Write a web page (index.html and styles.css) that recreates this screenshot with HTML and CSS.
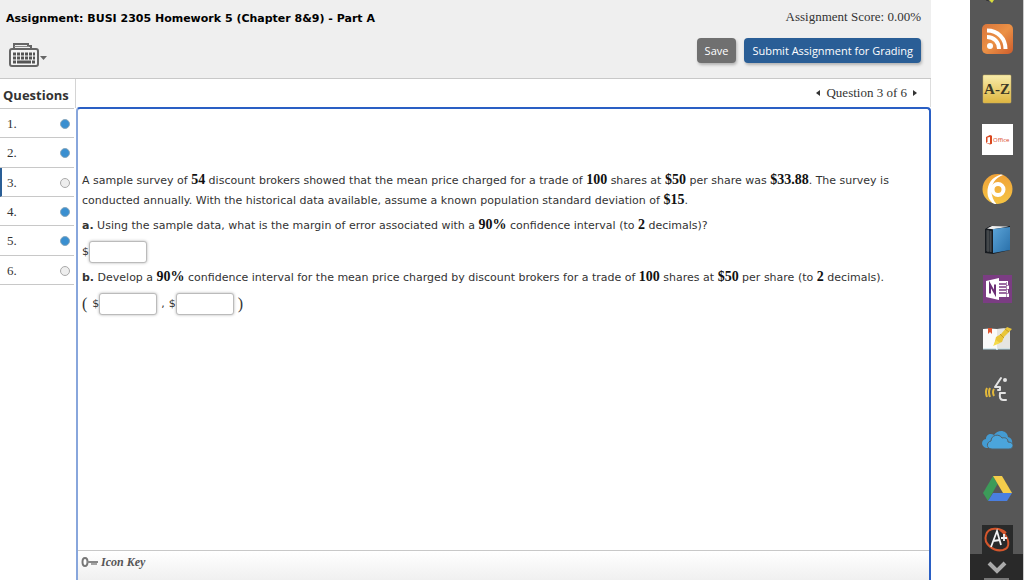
FILE: index.html
```html
<!DOCTYPE html>
<html lang="en">
<head>
    <meta charset="utf-8">
    <title>BUSI 2305 Homework 5</title>
    <link rel="stylesheet" href="styles.css">
</head>
<body>
    <div class="app">
        <main class="assignment">
            <header class="header">
                <div class="header-left">
                    <h1>Assignment: BUSI 2305 Homework 5 (Chapter 8&amp;9) - Part A</h1>
                    <button class="keyboard" aria-label="Keyboard tools">
                        <svg width="40" height="26" viewBox="0 0 40 26">
                            <path d="M6 6V2h14v2h3v3" fill="none" stroke="#666" stroke-width="2"/>
                            <path d="M6 4.500h15" stroke="#888"/>
                            <rect x="2" y="7" width="28" height="17" rx="2" fill="#f4f4f4" stroke="#666" stroke-width="2"/>
                            <path d="M5 12h22M5 16h22" stroke="#555" stroke-width="3" stroke-dasharray="3 1"/>
                            <path d="M5 20h3M9 20h14M24 20h3" stroke="#555" stroke-width="3"/>
                            <path d="M32 14h7l-3.500 4z" fill="#666"/>
                        </svg>
                    </button>
                </div>
                <div class="header-right">
                    <div class="score">Assignment Score: 0.00%</div>
                    <div class="buttons">
                        <button class="btn save">Save</button>
                        <button class="btn submit">Submit Assignment for Grading</button>
                    </div>
                </div>
            </header>
            <div class="columns">
                <nav class="questions">
                    <h2>Questions</h2>
                    <div class="question-list">
                        <a href="#">1.<span class="dot done"></span></a>
                        <a href="#">2.<span class="dot done"></span></a>
                        <a href="#" class="current">3.<span class="dot"></span></a>
                        <a href="#">4.<span class="dot done"></span></a>
                        <a href="#">5.<span class="dot done"></span></a>
                        <a href="#">6.<span class="dot"></span></a>
                    </div>
                </nav>
                <section class="work">
                    <div class="pager">
                        <button aria-label="Previous question"><svg width="4" height="6" viewBox="0 0 4 6"><path d="M4 0v6L0 3z" fill="#333"/></svg></button>
                        <span>Question 3 of 6</span>
                        <button aria-label="Next question"><svg width="4" height="6" viewBox="0 0 4 6"><path d="M0 0v6l4-3z" fill="#333"/></svg></button>
                    </div>
                    <div class="frame">
                        <div class="problem">
                            <p>A sample survey of <span class="num">54</span> discount brokers showed that the mean price charged for a trade of <span class="num">100</span> shares at <span class="num">$50</span> per share was <span class="num">$33.88</span>. The survey is<br>conducted annually. With the historical data available, assume a known population standard deviation of <span class="num">$15</span>.</p>
                            <p><b>a.</b> Using the sample data, what is the margin of error associated with a <span class="num">90%</span> confidence interval (to <span class="num">2</span> decimals)?</p>
                            <div class="answer"><label for="margin">$</label><input type="text" id="margin"></div>
                            <p><b>b.</b> Develop a <span class="num">90%</span> confidence interval for the mean price charged by discount brokers for a trade of <span class="num">100</span> shares at <span class="num">$50</span> per share (to <span class="num">2</span> decimals).</p>
                            <div class="answer"><span class="paren">(</span><label for="low">$</label><input type="text" id="low"><span class="comma">,</span><label for="high">$</label><input type="text" id="high"><span class="paren close">)</span></div>
                        </div>
                        <footer class="icon-key">
                            <svg width="17" height="12" viewBox="0 0 17 12">
                                <ellipse cx="4" cy="6" rx="2.500" ry="4" fill="#fff" stroke="#777" stroke-width="2"/>
                                <path d="M6 6h11" stroke="#888" stroke-width="2"/>
                                <path d="M11 7v2M13 7v2M15 7v2" stroke="#888" stroke-width="1.500"/>
                            </svg>
                            <a href="#">Icon Key</a>
                        </footer>
                    </div>
                </section>
            </div>
        </main>
        <aside class="dock">
            <div class="dock-icons">
                <div class="peek"><svg width="8" height="3" viewBox="0 0 8 3"><path d="M0 0l3 1" stroke="#333"/><path d="M3 0h5L6 3z" fill="#d9dc3c"/></svg></div>
                <a href="#" aria-label="News feed">
                    <svg viewBox="0 0 32 32">
                        <defs><linearGradient id="rss" x2="1" y2="1"><stop offset="0" stop-color="#d9743a"/><stop offset=".5" stop-color="#eb9146"/><stop offset="1" stop-color="#cc5c2c"/></linearGradient></defs>
                        <rect x="1" y="1" width="31" height="30" rx="5" fill="url(#rss)"/>
                        <circle cx="9" cy="23" r="3" fill="#fff"/>
                        <path d="M6 14c7 0 12 5 12 12M6 7.500c11 0 18.500 8 18.500 18.500" fill="none" stroke="#fff" stroke-width="4"/>
                    </svg>
                </a>
                <a href="#" aria-label="Index">
                    <svg viewBox="0 0 32 32">
                        <defs><linearGradient id="az" x2="0" y2="1"><stop offset="0" stop-color="#f8ecab"/><stop offset="1" stop-color="#dfb640"/></linearGradient></defs>
                        <rect x="2" y="2" width="28" height="28" rx="1" fill="url(#az)" stroke="#c9b061" stroke-width=".5"/>
                        <text x="16" y="21" text-anchor="middle" class="az">A-Z</text>
                    </svg>
                </a>
                <a href="#" aria-label="Office">
                    <svg viewBox="0 0 32 32">
                        <rect x="1" y="1" width="31" height="31" fill="#fff"/>
                        <path d="M5 14l4-2 2 .700v8L9 21.500 5 20l4 .400v-6.500L6.500 14.500V19L5 20z" fill="#d9471f"/>
                        <text x="12" y="19" class="office">Office</text>
                    </svg>
                </a>
                <a href="#" aria-label="Six">
                    <svg viewBox="0 0 32 32">
                        <defs><linearGradient id="six" x2="0" y2="1"><stop offset="0" stop-color="#f0a238"/><stop offset="1" stop-color="#f5c443"/></linearGradient></defs>
                        <circle cx="16.500" cy="16" r="15" fill="url(#six)"/>
                        <path d="M20 1.500C11 4 6 11 6.500 20c0 4 2 7 5 10 1.500 1 3 1 4 1-3-3-5-8-5-13C10.500 11 14 5 22 2z" fill="#fff"/>
                        <circle cx="17" cy="16.500" r="5.500" fill="none" stroke="#fff" stroke-width="4"/>
                    </svg>
                </a>
                <a href="#" aria-label="Book">
                    <svg viewBox="0 0 32 32">
                        <defs><linearGradient id="book" x2="1" y2="1"><stop offset="0" stop-color="#5ca4d8"/><stop offset="1" stop-color="#286fa9"/></linearGradient></defs>
                        <path d="M4 6l5-3h20v24l-17 4-8-1z" fill="#171b20"/>
                        <path d="M6 5.500L11 3l17 .500-16 2.700z" fill="#eee"/>
                        <path d="M12 6l17-2v23l-17 3z" fill="url(#book)"/>
                        <path d="M5 7l5 1v21l-5-1z" fill="#30353a"/>
                        <path d="M7 7v22M10 8v21" stroke="#777" stroke-width=".6"/>
                    </svg>
                </a>
                <a href="#" aria-label="Notebook">
                    <svg viewBox="0 0 32 32">
                        <rect x="2" y="2" width="29" height="28" fill="#7b3d83"/>
                        <path d="M18 8h9v4h1v4h-1v4h1v4H18z" fill="#fff"/>
                        <path d="M18 11h7M18 14h7M18 17h7M18 20h7" stroke="#7b3d83" stroke-width="1.300"/>
                        <path d="M25.500 9v15M25 12.500h3M25 16.500h3M25 20.500h3" stroke="#7b3d83" stroke-width=".6"/>
                        <path d="M5 8l13-3v22L5 24z" fill="#fff"/>
                        <path d="M9 20.500v-9l5 9v-9" fill="none" stroke="#6b2f75" stroke-width="2"/>
                    </svg>
                </a>
                <a href="#" aria-label="Notes">
                    <svg viewBox="0 0 32 32">
                        <path d="M2 6q7-1 14 0 7-1 13 0v20H17l-1 1-1-1H2z" fill="#fafafa"/>
                        <path d="M16 6q7-1 13 0v20H16z" fill="#e5e5e2"/>
                        <path d="M2 26h13l1 1 1-1h12" fill="none" stroke="#b7d9e5"/>
                        <path d="M7 5h4v6l-2-2-2 2z" fill="#df5731"/>
                        <path d="M13 22l2-8 5-3 6-7 5 2-8 8-2 5z" fill="#e9c63a"/>
                        <path d="M19 11l4 4M24 6l4 3" stroke="#c99e26"/>
                        <path d="M12 23l3-6 4 3z" fill="#f5dc4d"/>
                    </svg>
                </a>
                <a href="#" aria-label="Voice">
                    <svg viewBox="0 0 32 32" fill="none">
                        <path d="M20 5l-6 9h5v3h-2M19 20h5M19 20q-1 7 3 7h3" stroke="#e4e4e4" stroke-width="2" stroke-linejoin="round" stroke-linecap="round"/>
                        <circle cx="24" cy="7" r="2" fill="#e4e4e4"/>
                        <path d="M6 15q-2 4 0 9M9 15q-2 4 0 9M13 16q-2 3 0 7" stroke="#e2b83b" stroke-width="2"/>
                    </svg>
                </a>
                <a href="#" aria-label="Cloud drive">
                    <svg viewBox="0 0 32 32">
                        <path d="M7 25c-7 0-8-8-2-9 0-5 5-6 8-4 4-6 13-5 14 2 5 1 5 7 3 9z" fill="#449bd2"/>
                        <path d="M11 26c-6 0-6-7-1-8 0-6 8-8 11-3 4-1 6 1 6 4 7 0 6 7 1 7z" fill="#4ba5dc" stroke="#52616a"/>
                    </svg>
                </a>
                <a href="#" aria-label="Drive">
                    <svg viewBox="0 0 32 32">
                        <path d="M12 3l4.500 8L7 28l-5-8z" fill="#3c9b59"/>
                        <path d="M12 3h9l10 17H22z" fill="#f4cd4b"/>
                        <path d="M12 20h19l-5 8H7z" fill="#4a7fe0"/>
                    </svg>
                </a>
                <a href="#" aria-label="Grades">
                    <svg viewBox="0 0 32 32" fill="none">
                        <rect x="1" y="2" width="31" height="30" fill="#292a2a"/>
                        <path d="M25 10C19 4 7 4 5 12c-3 9 8 17 17 15 8-2 7-13-3-20" stroke="#d4562c" stroke-width="2"/>
                        <path d="M10 24l6-16 4 14M12 18l7-1M20 15h6M23 11v7" stroke="#f2f2f2" stroke-width="1.800"/>
                    </svg>
                </a>
            </div>
            <button class="dock-more" aria-label="Scroll down">
                <svg width="20" height="13" viewBox="0 0 20 13"><path d="M2 2l8 8 8-8" fill="none" stroke="#aaa" stroke-width="4"/></svg>
                <span class="handle"></span>
            </button>
        </aside>
    </div>
</body>
</html>
```
FILE: styles.css
```css
* {
    box-sizing: border-box;
}
body {
    margin: 0;
    background-color: #fff;
    color: #333;
    font-family: "DejaVu Sans", Verdana, sans-serif;
    font-size: 11px;
}
h1, h2, p {
    margin: 0;
}
a {
    color: inherit;
    text-decoration: none;
}
button {
    padding: 0;
    border: none;
    background: none;
    color: inherit;
    cursor: pointer;
}
svg {
    display: block;
}
.app {
    display: flex;
    height: 100vh;
    overflow: hidden;
}
.assignment {
    flex: 1;
    min-width: 0;
    margin-right: 39px;
    display: flex;
    flex-direction: column;
}

/* header */
.header {
    display: flex;
    justify-content: space-between;
    height: 79px;
    padding: 9px 10px 0 6px;
    background-color: #efefef;
    border-bottom: 1px solid #c8c8c8;
}
h1 {
    font-size: 11px;
    line-height: 20px;
    color: #000;
}
.keyboard {
    margin: 13px 0 0 2px;
}
.header-right {
    text-align: right;
}
.score {
    font-family: "Liberation Serif", serif;
    font-size: 13px;
    line-height: 16px;
}
.buttons {
    display: flex;
    justify-content: flex-end;
    gap: 8px;
    margin-top: 13px;
}
.btn {
    height: 25px;
    padding: 0 8px;
    border-radius: 4px;
    color: #fff;
    font-family: "Open Sans", sans-serif;
    font-size: 11px;
    box-shadow: 1px 2px 3px rgba(0, 0, 0, 0.25);
}
.save {
    background-color: #707070;
}
.submit {
    background-color: #2a5e96;
}

/* question list */
.columns {
    flex: 1;
    display: flex;
    min-height: 0;
}
.questions {
    width: 76px;
    flex-shrink: 0;
}
h2 {
    height: 29px;
    padding: 6px 0 0 3px;
    border-right: 1px solid #d4d4d4;
    font-family: "Open Sans", sans-serif;
    font-size: 13px;
    line-height: 20px;
}
.question-list {
    display: grid;
    grid-auto-rows: 1fr;
    height: 177px;
    margin-right: 2px;
    border-top: 1px solid #c8c8c8;
}
.question-list a {
    display: flex;
    align-items: center;
    justify-content: space-between;
    padding: 2px 4px 0 7px;
    border-bottom: 1px solid #c8c8c8;
    font-family: "Liberation Serif", serif;
    font-size: 13px;
}
.question-list .current {
    padding-left: 5px;
    border-left: 2px solid #2a5e96;
}
.dot {
    width: 10px;
    height: 10px;
    border: 1px solid #aaa;
    border-radius: 50%;
    background-color: #eee;
}
.dot.done {
    background-color: #3a8fd0;
    border-color: #8ba9bd;
}

/* work area */
.work {
    flex: 1;
    min-width: 0;
    display: flex;
    flex-direction: column;
}
.pager {
    display: flex;
    justify-content: flex-end;
    align-items: center;
    gap: 6px;
    height: 28px;
    flex-shrink: 0;
    padding-right: 13px;
    border-right: 1px solid #ddd;
    font-family: "Liberation Serif", serif;
    font-size: 13px;
}
.frame {
    flex: 1;
    display: flex;
    flex-direction: column;
    border: 2px solid #2a5fc4;
    border-left-color: #88a6dc;
    border-bottom: none;
    border-radius: 4px 4px 0 0;
}
.problem {
    flex: 1;
    padding: 62px 4px 0;
    line-height: 20px;
}
.problem p {
    margin-bottom: 5px;
}
.num {
    color: #111;
    font-family: "Liberation Serif", serif;
    font-size: 14px;
    font-weight: bold;
    line-height: 16px;
}
.answer {
    display: flex;
    align-items: center;
    height: 22px;
    margin-bottom: 5px;
}
.answer input {
    width: 58px;
    height: 22px;
    border: 1px solid #bbb;
    border-radius: 3px;
    box-shadow: 0 0 3px rgba(0, 0, 0, 0.3);
}
.paren {
    margin-right: 5px;
    font-family: "Liberation Serif", serif;
    font-size: 16px;
}
.close {
    margin-left: 4px;
}
.comma {
    margin: 0 4px;
}
.icon-key {
    display: flex;
    gap: 3px;
    height: 30px;
    padding: 5px 3px 0;
    border-top: 1px solid #c8c8c8;
    background-image: linear-gradient(#fff, #f0f0f0);
    color: #555;
    font-family: "Liberation Serif", serif;
    font-size: 12px;
    font-style: italic;
    font-weight: bold;
    line-height: 13px;
}

/* dock */
.dock {
    display: flex;
    flex-direction: column;
    width: 54px;
    border-right: 1px solid #ccc;
    background-color: #575757;
}
.dock-icons {
    flex: 1;
    min-height: 0;
    overflow: hidden;
}
.peek {
    height: 14px;
    padding-left: 16px;
}
.dock-icons a {
    display: block;
    height: 50px;
    padding: 9px 0 0 11px;
}
.dock-icons a svg {
    width: 32px;
    height: 32px;
}
.az {
    font-family: "Liberation Serif", serif;
    font-size: 15px;
    font-weight: bold;
    fill: #3c3826;
}
.office {
    font-family: "Open Sans", sans-serif;
    font-size: 6px;
    fill: #d9471f;
}
.dock-more {
    display: flex;
    flex-direction: column;
    align-items: center;
    justify-content: space-between;
    height: 26px;
    padding-top: 7px;
    background-color: #292929;
}
.handle {
    width: 25px;
    height: 2px;
    background-color: #777;
}
```
